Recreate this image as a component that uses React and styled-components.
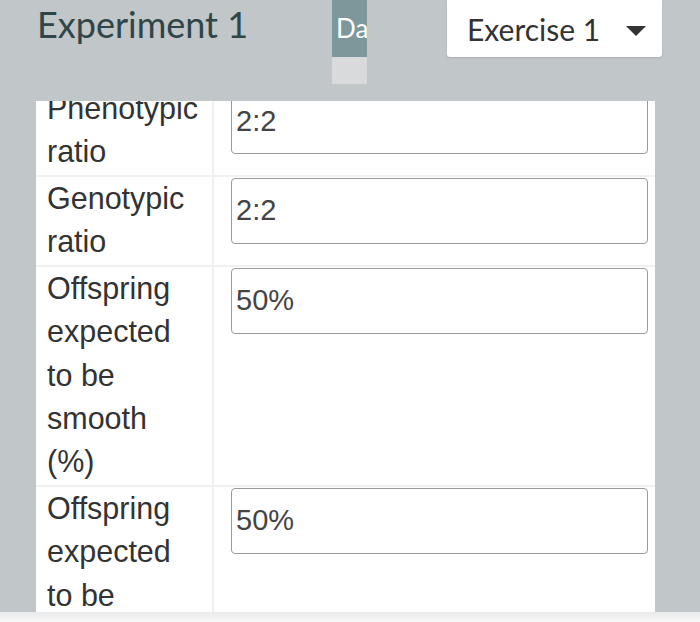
import React from "react";
import styled, { createGlobalStyle } from "styled-components";

const Global = createGlobalStyle`
  html, body { margin: 0; padding: 0; }
  body { background: #c1c6c8; width: 700px; height: 622px; overflow: hidden; }
`;

const Page = styled.div`
  width: 700px;
  height: 622px;
  display: flex;
  flex-direction: column;
  background: #c1c6c8;
`;

const Header = styled.div`
  height: 101px;
  flex: none;
  display: flex;
  align-items: flex-start;
  padding-left: 37px;
`;

const Title = styled.h1`
  margin: 0;
  width: 295px;
  flex: none;
  font-family: Lato, "Liberation Sans", sans-serif;
  font-weight: 400;
  font-size: 36px;
  line-height: 49px;
  color: #2f4547;
`;

const TabColumn = styled.div`
  width: 35px;
  flex: none;
  display: flex;
  flex-direction: column;
  overflow: hidden;
`;

const Tab = styled.div`
  height: 57px;
  background: #7d979a;
  color: #ffffff;
  font-family: Lato, "Liberation Sans", sans-serif;
  font-size: 26px;
  line-height: 56px;
  padding-left: 4px;
  white-space: nowrap;
`;

const TabShelf = styled.div`
  height: 27px;
  background: #d8dadb;
`;

const Select = styled.div`
  margin-left: 80px;
  width: 215px;
  height: 57px;
  flex: none;
  background: #ffffff;
  border-radius: 0 0 3px 3px;
  box-shadow: 0 1px 2px rgba(0, 0, 0, 0.12);
  display: flex;
  align-items: center;
  padding-left: 20px;
  box-sizing: border-box;
  font-family: Lato, "Liberation Sans", sans-serif;
  font-size: 30px;
  color: #333333;
`;

const Caret = styled.span`
  margin-left: 26px;
  width: 0;
  height: 0;
  border-left: 10px solid transparent;
  border-right: 10px solid transparent;
  border-top: 10px solid #333333;
  margin-top: 4px;
`;

const Panel = styled.div`
  flex: 1;
  margin: 0 45px 0 36px;
  background: #ffffff;
  overflow: hidden;
`;

const Table = styled.div`
  margin-top: -16px;
  display: flex;
  flex-direction: column;
`;

const Row = styled.div`
  display: grid;
  grid-template-columns: 178px 1fr;
  border-top: 2px solid #f0f0f0;
`;

const Label = styled.div`
  padding: 0 12px 1.33px 11px;
  border-right: 2px solid #f0f0f0;
  font-family: "Liberation Sans", Arial, sans-serif;
  font-size: 30.5px;
  line-height: 43.33px;
  color: #333333;
`;

const Cell = styled.div`
  padding: 1px 7px 0 17px;
`;

const Input = styled.div`
  height: 66px;
  box-sizing: border-box;
  border: 1.5px solid #9a9a9a;
  border-radius: 4px;
  display: flex;
  align-items: center;
  padding-left: 4px;
  font-family: "Liberation Sans", Arial, sans-serif;
  font-size: 29px;
  color: #444444;
`;

const Footer = styled.div`
  height: 10px;
  flex: none;
  background: linear-gradient(#e9eaeb, #f7f7f7);
`;

const rows = [
  { label: "Phenotypic ratio", value: "2:2" },
  { label: "Genotypic ratio", value: "2:2" },
  { label: "Offspring expected to be smooth (%)", value: "50%" },
  { label: "Offspring expected to be wrinkled (%)", value: "50%" },
];

export default function App() {
  return (
    <>
      <Global />
      <Page>
        <Header>
          <Title>Experiment 1</Title>
          <TabColumn>
            <Tab>Data</Tab>
            <TabShelf />
          </TabColumn>
          <Select>
            Exercise 1
            <Caret />
          </Select>
        </Header>
        <Panel>
          <Table>
            {rows.map((r) => (
              <Row key={r.label}>
                <Label>{r.label}</Label>
                <Cell>
                  <Input>{r.value}</Input>
                </Cell>
              </Row>
            ))}
          </Table>
        </Panel>
        <Footer />
      </Page>
    </>
  );
}
